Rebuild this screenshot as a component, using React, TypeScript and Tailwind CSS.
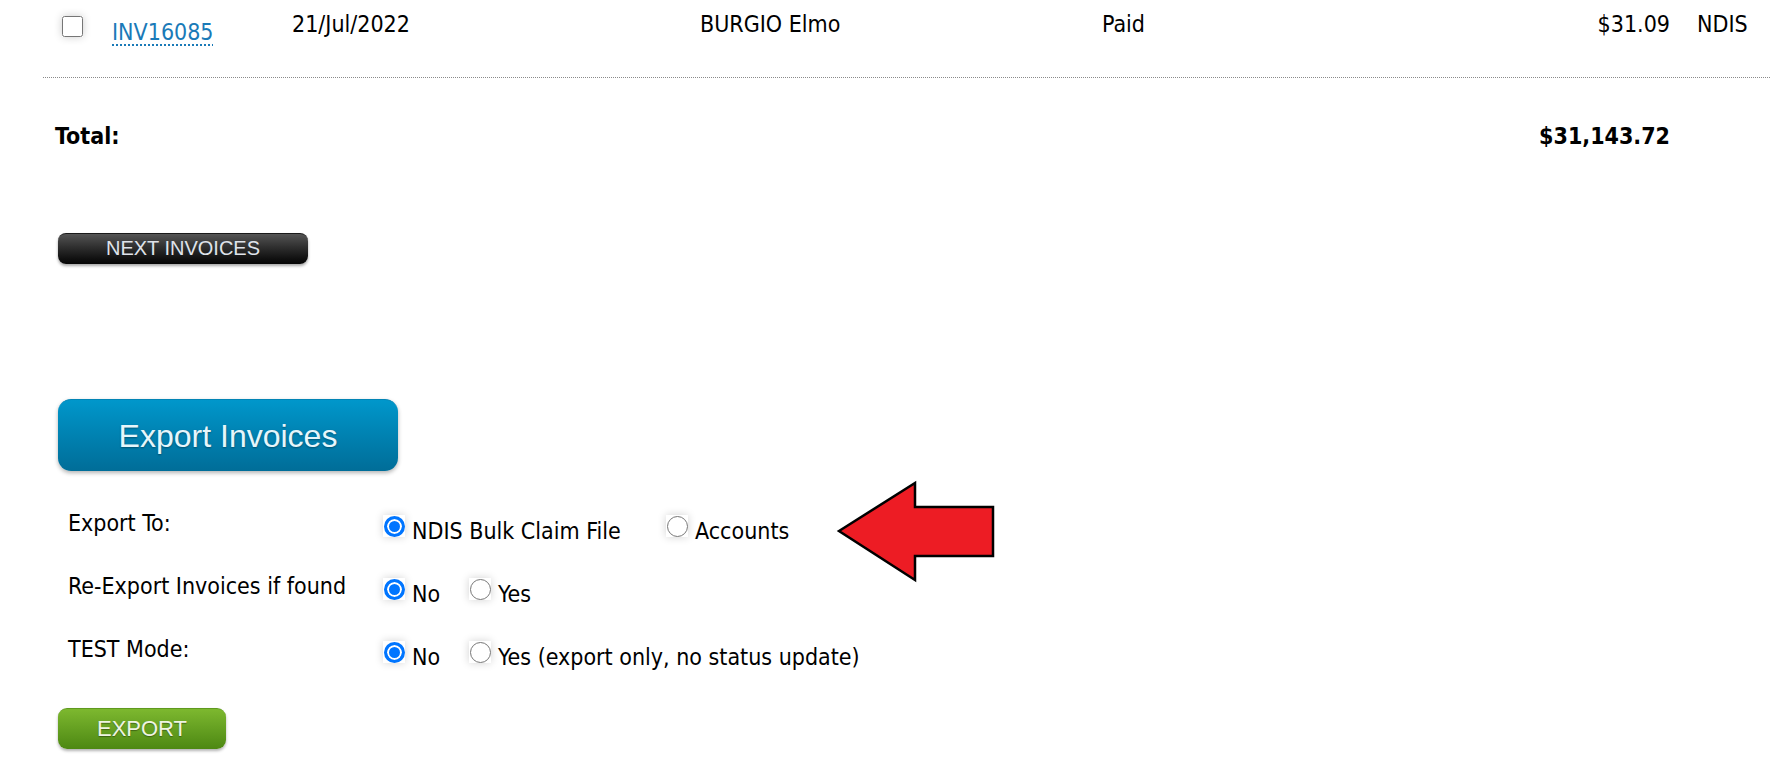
const bodyFont = "font-['DejaVu_Sans_Condensed','Liberation_Sans',sans-serif]";
const btnFont = "font-['Liberation_Sans',Arial,sans-serif]";

function Radio({ checked }: { checked?: boolean }) {
  return (
    <span className="mt-[6px] w-[22px] h-[22px] shrink-0 flex items-center justify-center bg-white shadow-[0_0_8px_rgba(0,0,0,0.18)]">
      {checked ? (
        <span className="w-[21px] h-[21px] rounded-full border-[3px] border-[#0075ff] bg-[#0075ff] shadow-[inset_0_0_0_2px_#fff]" />
      ) : (
        <span className="w-[21px] h-[21px] rounded-full border-[1.5px] border-[#767676] bg-white" />
      )}
    </span>
  );
}

function Option({ label, checked, width }: { label: string; checked?: boolean; width?: string }) {
  return (
    <label className={`flex items-start ${width ?? ""}`}>
      <Radio checked={checked} />
      <span className="ml-[7px] mt-[8px] whitespace-nowrap">{label}</span>
    </label>
  );
}

export default function App() {
  return (
    <div className={`relative w-full h-[771px] overflow-hidden bg-white text-black text-[23px] leading-[28px] ${bodyFont}`}>
      {/* last invoice row */}
      <div className="flex items-start h-[77px] pt-[10px] pl-[62px]">
        <input
          type="checkbox"
          className="m-0 mt-[6px] w-[21px] h-[21px] shrink-0 shadow-[0_0_8px_rgba(0,0,0,0.2)]"
        />
        <div className="ml-[29px] w-[180px] mt-[8px]">
          <a
            href="#"
            className="text-[#1a7ab8] underline decoration-dotted decoration-[2px] underline-offset-[4px]"
          >
            INV16085
          </a>
        </div>
        <div className="w-[408px]">21/Jul/2022</div>
        <div className="w-[402px]">BURGIO Elmo</div>
        <div className="w-[420px]">Paid</div>
        <div className="w-[148px] text-right">$31.09</div>
        <div className="ml-[27px]">NDIS</div>
      </div>
      <div className="ml-[43px] border-t border-dotted border-[#8a8a8a]" />

      {/* total */}
      <div className="mt-[44px] w-[1670px] pl-[55px] flex justify-between font-bold">
        <span>Total:</span>
        <span>$31,143.72</span>
      </div>

      {/* next invoices */}
      <button
        className={`mt-[83px] ml-[58px] w-[250px] h-[31px] flex items-center justify-center pb-[3px] rounded-[8px] border-t border-[#1a1a1a] bg-gradient-to-b from-[#555] via-[#2a2a2a] to-[#050505] shadow-[0_2px_3px_rgba(0,0,0,0.35)] text-[#dfe3ea] text-[20px] ${btnFont}`}
      >
        NEXT INVOICES
      </button>

      {/* export header */}
      <div
        className={`mt-[135px] ml-[58px] w-[340px] h-[72px] flex items-center justify-center rounded-[13px] border-t border-[#0284b5] bg-gradient-to-b from-[#0097cb] to-[#006d98] shadow-[0_2px_4px_rgba(0,0,0,0.3)] text-[#e6f6fb] text-[32px] [text-shadow:0_1px_2px_rgba(0,0,0,0.35)] ${btnFont}`}
      >
        Export Invoices
      </div>

      {/* export options */}
      <div className="mt-[38px] flex flex-col">
        <div className="flex h-[63px]">
          <div className="w-[383px] pl-[68px]">Export To:</div>
          <Option label="NDIS Bulk Claim File" checked width="w-[283px]" />
          <Option label="Accounts" />
        </div>
        <div className="flex h-[63px]">
          <div className="w-[383px] pl-[68px]">Re-Export Invoices if found</div>
          <Option label="No" checked width="w-[86px]" />
          <Option label="Yes" />
        </div>
        <div className="flex h-[63px]">
          <div className="w-[383px] pl-[68px]">TEST Mode:</div>
          <Option label="No" checked width="w-[86px]" />
          <Option label="Yes (export only, no status update)" />
        </div>
      </div>

      <button
        className={`mt-[10px] ml-[58px] w-[168px] h-[41px] flex items-center justify-center rounded-[9px] border-t border-[#5f9a1e] bg-gradient-to-b from-[#7db82f] to-[#4d8812] shadow-[0_2px_3px_rgba(0,0,0,0.3)] text-[#eef4e2] text-[22px] [text-shadow:0_1px_1px_rgba(0,0,0,0.35)] ${btnFont}`}
      >
        EXPORT
      </button>

      {/* annotation arrow */}
      <svg className="absolute left-[836px] top-[480px]" width="160" height="103" viewBox="0 0 160 103">
        <polygon
          points="3,51 79,3 79,27 157,27 157,76 79,76 79,100"
          fill="#ed1c24"
          stroke="#000"
          strokeWidth="2.5"
          strokeLinejoin="miter"
        />
      </svg>
    </div>
  );
}
